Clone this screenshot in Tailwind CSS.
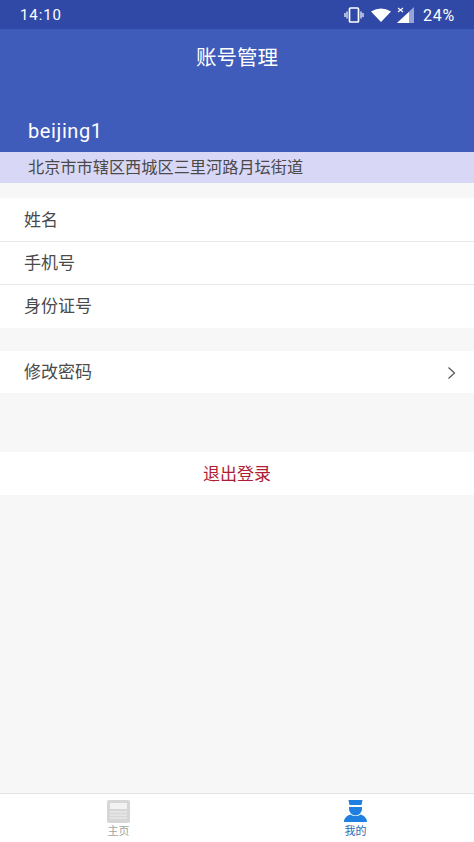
<!DOCTYPE html>
<html lang="zh-CN">
<head>
  <meta charset="UTF-8" />
  <meta name="viewport" content="width=device-width, initial-scale=1.0" />
  <title>账号管理</title>
  <script src="https://cdn.jsdelivr.net/npm/@tailwindcss/browser@4"></script>
</head>
<body class="bg-[#f7f7f7] font-['Roboto','Noto_Sans_CJK_SC',sans-serif]">
  <div class="w-[474px] h-[842px] flex flex-col overflow-hidden">

    <!-- status bar -->
    <div class="h-[29px] bg-[#3149a6] flex items-center text-white shrink-0">
      <span class="ml-[20px] pt-[2px] text-[15px] tracking-[0.9px]">14:10</span>
      <div class="ml-auto mr-[19px] flex items-center">
        <svg width="20" height="16" viewBox="0 0 20 16" fill="none" stroke="white">
          <rect x="5.500" y="1" width="9" height="14" rx="1" stroke-width="1.7" />
          <path d="M3 4.500v7M1 6v4M17 4.500v7M19 6v4" stroke-width="1.200" />
        </svg>
        <svg class="ml-[7px]" width="20" height="14" viewBox="0 0 20 14"><path d="M0 3.500Q10-2.500 20 3.500L10 14Z" fill="white" /></svg>
        <svg class="ml-[6px]" width="17" height="16" viewBox="0 0 17 16">
          <path d="M17 0V16H0Z" fill="white" fill-opacity="0.5" />
          <path d="M12 5V16H0Z" fill="white" />
          <path d="M1 1l5 4M6 1L1 5" stroke="white" stroke-width="1.200" />
        </svg>
        <span class="ml-[9px] pt-[2px] text-[16px] tracking-[0.800px]">24%</span>
      </div>
    </div>

    <!-- header -->
    <div class="h-[123px] bg-[#3f5cbb] text-white shrink-0 flex flex-col">
      <div class="mt-[16px] text-center text-[20.500px] leading-[26px]">账号管理</div>
      <div class="mt-auto mb-[8px] ml-[28px] text-[20px] leading-[26px] tracking-[0.600px]">beijing1</div>
    </div>
    <div class="h-[31px] bg-[#d9d7f6] pl-[28px] pt-[2px] flex items-center text-[16.200px] text-[#4a4a4a] shrink-0">北京市市辖区西城区三里河路月坛街道</div>

    <!-- info rows -->
    <div class="mt-[15px] bg-white text-[17px] text-[#4a4a4a] shrink-0">
      <div class="h-[44px] pl-[24px] pt-[2px] flex items-center border-b border-[#e8e8e8]">姓名</div>
      <div class="h-[43px] pl-[24px] pt-[2px] flex items-center border-b border-[#e8e8e8]">手机号</div>
      <div class="h-[43px] pl-[24px] pt-[1px] flex items-center">身份证号</div>
    </div>

    <div class="mt-[23px] h-[42px] bg-white pl-[24px] pr-[18px] pt-[2px] flex items-center justify-between text-[17px] text-[#4a4a4a] shrink-0">
      <span>修改密码</span>
      <svg width="9" height="14" viewBox="0 0 9 14" fill="none" stroke="#555" stroke-width="1.200"><path d="M1.500 1.500L7.500 7L1.500 12.500" /></svg>
    </div>

    <div class="mt-[59px] h-[43px] bg-white pt-[2px] flex items-center justify-center text-[17px] text-[#b01c33] shrink-0">退出登录</div>

    <div class="flex-1"></div>

    <!-- bottom nav -->
    <div class="h-[49px] bg-white border-t border-[#e3e3e3] flex shrink-0">
      <div class="flex-1 flex flex-col items-center pt-[6px]">
        <svg width="23" height="23" viewBox="0 0 23 23">
          <rect width="23" height="23" rx="2" fill="#d6d6d6" />
          <rect x="3" y="3" width="17" height="6" fill="#f2f2f2" />
          <path d="M3 12h17M3 15h17M3 18h17" stroke="#f2f2f2" stroke-width="1.200" />
        </svg>
        <span class="text-[11px] leading-[14px] mt-[2px] text-[#a3a3a3]">主页</span>
      </div>
      <div class="flex-1 flex flex-col items-center pt-[6px]">
        <svg width="23" height="23" viewBox="0 0 23 23" fill="#2080e0">
          <path d="M4.500 0h14l-1 5h-12z" />
          <path d="M5 7h13v2a6.500 6.500 0 0 1-13 0z" />
          <path d="M0 22c0-4 3-6.500 6.500-7.500 3 2 7 2 10 0 3.500 1 6.500 3.500 6.500 7.500z" />
        </svg>
        <span class="text-[11px] leading-[14px] mt-[2px] text-[#2b6cb0]">我的</span>
      </div>
    </div>
  </div>
</body>
</html>
